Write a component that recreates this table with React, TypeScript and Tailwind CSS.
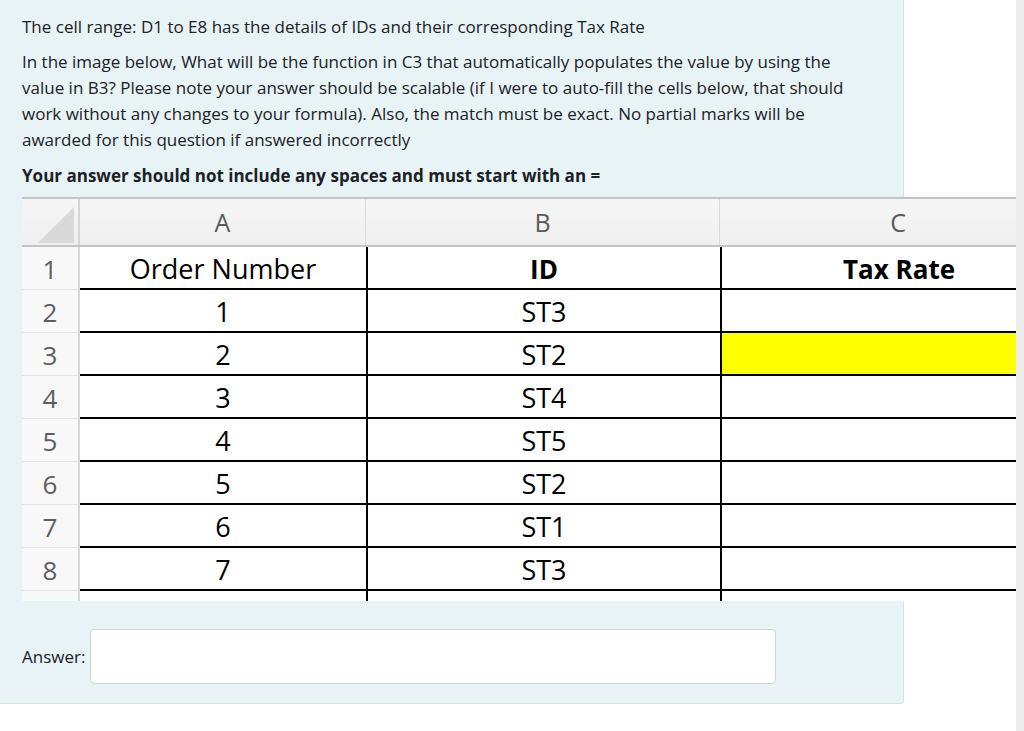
import React from 'react';

const rows = [
  { n: 1, a: 'Order Number', b: 'ID', c: 'Tax Rate', head: true },
  { n: 2, a: '1', b: 'ST3', c: '' },
  { n: 3, a: '2', b: 'ST2', c: '', hl: true },
  { n: 4, a: '3', b: 'ST4', c: '' },
  { n: 5, a: '4', b: 'ST5', c: '' },
  { n: 6, a: '5', b: 'ST2', c: '' },
  { n: 7, a: '6', b: 'ST1', c: '' },
  { n: 8, a: '7', b: 'ST3', c: '' },
];

const cellFont = { fontFamily: '"Open Sans", "Noto Sans", sans-serif' };

function Sheet() {
  return (
    <div className="w-[994px] overflow-hidden bg-white" style={cellFont}>
      {/* column header */}
      <div className="flex h-[50px] border-t-2 border-b-2 border-[#c4c4c4] bg-gradient-to-b from-[#f6f6f6] to-[#efefef]">
        <div className="w-[58px] shrink-0 border-r-2 border-[#d6d6d6] flex items-end justify-end pr-[4px] pb-[2px]">
          <svg width="36" height="36" viewBox="0 0 36 36">
            <polygon points="36,0 36,36 0,36" fill="#d9d9d9" />
          </svg>
        </div>
        <div className="w-[286px] shrink-0 border-r border-[#dadada] flex items-center justify-center text-[25px] text-[#5a5a5a]">A</div>
        <div className="w-[354px] shrink-0 border-r border-[#dadada] flex items-center justify-center text-[25px] text-[#5a5a5a]">B</div>
        <div className="w-[356px] shrink-0 flex items-center justify-center text-[25px] text-[#5a5a5a]">C</div>
      </div>
      {rows.map(r => (
        <div key={r.n} className="flex h-[43px]">
          <div className="w-[58px] shrink-0 bg-[#f8f8f8] border-r-2 border-b border-r-[#d6d6d6] border-b-[#e4e4e4] flex items-center justify-center pt-[2px] text-[26px] text-[#5e5e5e]">
            {r.n}
          </div>
          <div className="w-[286px] shrink-0 border-b-2 border-black flex items-center justify-center pt-[3px] text-[27px] text-black">
            {r.a}
          </div>
          <div className={`w-[354px] shrink-0 border-l-2 border-b-2 border-black flex items-center justify-center pt-[3px] text-black ${r.head ? 'font-bold text-[26px]' : 'text-[27px]'}`}>
            {r.b}
          </div>
          <div className={`w-[356px] shrink-0 border-l-2 border-b-2 border-black flex items-center justify-center pt-[3px] text-black ${r.head ? 'font-bold text-[26px]' : 'text-[27px]'} ${r.hl ? 'bg-[#ffff00]' : ''}`}>
            {r.c}
          </div>
        </div>
      ))}
      <div className="flex h-[10px]">
        <div className="w-[58px] shrink-0 bg-[#f8f8f8] border-r-2 border-[#d6d6d6]" />
        <div className="w-[286px] shrink-0" />
        <div className="w-[354px] shrink-0 border-l-2 border-black" />
        <div className="w-[356px] shrink-0 border-l-2 border-black" />
      </div>
    </div>
  );
}

export default function App() {
  return (
    <div className="flex min-h-screen bg-white" style={{ fontFamily: '"Open Sans", "Noto Sans", sans-serif' }}>
      <div className="w-[1016px] shrink-0">
        <div className="w-[904px] bg-[#e7f3f5] border-r border-b border-[#cbe5eb] rounded-br-[4px] pl-[22px] pt-[14px] pb-[19px] text-[#1d2125] text-[17px] leading-[26px]">
          <p>The cell range: D1 to E8 has the details of IDs and their corresponding Tax Rate</p>
          <p className="mt-[9px] w-[850px]">
            In the image below, What will be the function in C3 that automatically populates the value by using the value in B3? Please note your answer should be scalable (if I were to auto-fill the cells below, that should work without any changes to your formula). Also, the match must be exact. No partial marks will be awarded for this question if answered incorrectly
          </p>
          <p className="mt-[10px] font-bold">Your answer should not include any spaces and must start with an =</p>
          <div className="mt-[8px]">
            <Sheet />
          </div>
          <div className="flex items-center mt-[28px]">
            <span className="w-[68px] shrink-0">Answer:</span>
            <input className="w-[686px] h-[55px] bg-white border border-[#ced4da] rounded-[4px] outline-none px-3" />
          </div>
        </div>
      </div>
      <div className="w-[8px] shrink-0 bg-[#ececec]" />
    </div>
  );
}
